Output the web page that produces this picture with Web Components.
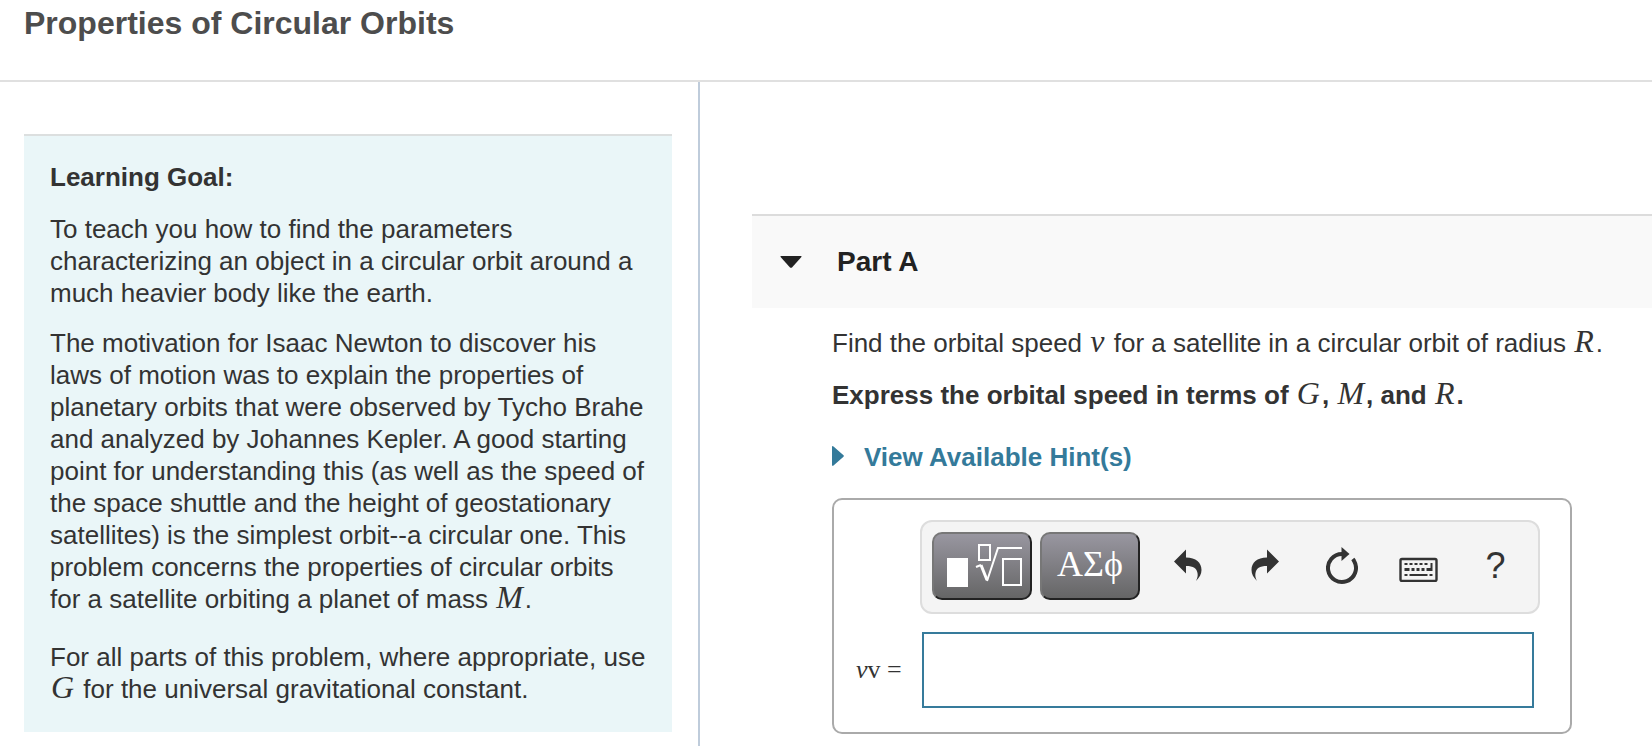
<!DOCTYPE html>
<html lang="en">
<head>
<meta charset="utf-8">
<title>Properties of Circular Orbits</title>
<style>
	body {
		margin: 0;
		background: #fff;
		color: #333;
		font: 26px/32px "Liberation Sans", Arial, sans-serif;
	}
	p {
		margin: 0;
	}
</style>
</head>
<body>
<problem-page>
	<span slot="title">Properties of Circular Orbits</span>
	<learning-goal slot="intro">
		<p>To teach you how to find the parameters characterizing an object in a circular orbit around a much heavier body like the earth.</p>
		<p>The motivation for Isaac Newton to discover his laws of motion was to explain the properties of planetary orbits that were observed by Tycho Brahe and analyzed by Johannes Kepler. A good starting point for understanding this (as well as the speed of the space shuttle and the height of geostationary satellites) is the simplest orbit--a circular one. This problem concerns the properties of circular orbits for a satellite orbiting a planet of mass <math-var>M</math-var>.</p>
		<p slot="note">For all parts of this problem, where appropriate, use <math-var>G</math-var> for the universal gravitational constant.</p>
	</learning-goal>
	<problem-part slot="parts" label="Part A">
		<p>Find the orbital speed <math-var>v</math-var> for a satellite in a circular orbit of radius <math-var>R</math-var>.</p>
		<p slot="instructions">Express the orbital speed in terms of <math-var>G</math-var>, <math-var>M</math-var>, and <math-var>R</math-var>.</p>
		<answer-box slot="answer"><i>v</i>v =</answer-box>
	</problem-part>
</problem-page>

<script>
'use strict';

window.customElements.define('math-var', class extends HTMLElement {
	constructor () {
		super();
		this.attachShadow({mode: 'open'}).innerHTML = `
			<style>
				:host {
					display: inline-block;
					padding: 0 2px 0 1px;
					font: italic 400 32px/26px "Liberation Serif", "Times New Roman", serif;
				}
			</style>
			<slot></slot>
		`;
	}
});

window.customElements.define('problem-page', class extends HTMLElement {
	constructor () {
		super();
		this.attachShadow({mode: 'open'}).innerHTML = `
			<style>
				:host {
					display: flex;
					flex-direction: column;
					min-height: 100vh;
				}
				header {
					padding: 5px 24px 39px;
					border-bottom: 2px solid #e0e0e0;
				}
				h1 {
					margin: 0;
					color: #4d4d4d;
					font-size: 32px;
					line-height: 36px;
				}
				main {
					flex: 1;
					display: grid;
					grid-template-columns: 175fr 238fr;
				}
				.intro {
					padding: 52px 26px 12px 24px;
					border-right: 2px solid #bfccdb;
				}
				.parts {
					min-width: 0;
					padding: 132px 0 10px 52px;
				}
			</style>
			<header><h1><slot name="title"></slot></h1></header>
			<main>
				<section class="intro"><slot name="intro"></slot></section>
				<section class="parts"><slot name="parts"></slot></section>
			</main>
		`;
	}
});

window.customElements.define('learning-goal', class extends HTMLElement {
	constructor () {
		super();
		this.attachShadow({mode: 'open'}).innerHTML = `
			<style>
				:host {
					display: block;
					padding: 25px 26px 27px;
					border-top: 2px solid #dcdfdf;
					background: #eaf6f8;
				}
				h2 {
					margin: 0 0 20px;
					font-size: 26px;
					line-height: 32px;
				}
				.text {
					display: flex;
					flex-direction: column;
					gap: 18px;
				}
				.note {
					margin-top: 26px;
				}
			</style>
			<h2>Learning Goal:</h2>
			<div class="text"><slot></slot></div>
			<div class="note"><slot name="note"></slot></div>
		`;
	}
});

window.customElements.define('problem-part', class extends HTMLElement {
	constructor () {
		super();
		this.attachShadow({mode: 'open'}).innerHTML = `
			<style>
				:host {
					display: block;
				}
				h2 {
					margin: 0;
					border-top: 2px solid #dcdcdc;
					background: #f9f9f9;
				}
				button {
					display: flex;
					align-items: center;
					gap: 35px;
					width: 100%;
					padding: 30px 28px;
					border: 0;
					background: none;
					color: #222;
					font: 700 28px/32px "Liberation Sans", Arial, sans-serif;
					text-align: left;
				}
				.body {
					padding: 19px 0 0 80px;
				}
				.instructions {
					margin-top: 20px;
					font-weight: 700;
				}
				.hints {
					display: flex;
					width: fit-content;
					align-items: center;
					gap: 20px;
					margin-top: 30px;
					color: #347a9a;
					font-weight: 700;
					text-decoration: none;
				}
				.answer {
					margin: 25px 80px 0 0;
				}
				svg {
					flex: none;
					fill: currentColor;
				}
			</style>
			<h2>
				<button type="button" aria-expanded="true">
					<svg width="22" height="12" viewBox="0 0 22 12" aria-hidden="true"><path d="M1 0h20q1 0 .4 1L12 11.400q-1 .8-2 0L.6 1Q0 0 1 0z"/></svg>
					<span></span>
				</button>
			</h2>
			<div class="body">
				<slot></slot>
				<div class="instructions"><slot name="instructions"></slot></div>
				<a class="hints" href="#hints">
					<svg width="12" height="22" viewBox="0 0 12 22" aria-hidden="true"><path d="M0 .5Q.5-.3 1.500.600L11.500 9.300q.7.7 0 1.400L1.500 19.500Q.5 20.200 0 19.500z"/></svg>
					<span>View Available Hint(s)</span>
				</a>
				<div class="answer"><slot name="answer"></slot></div>
			</div>
		`;
		this.shadowRoot.querySelector('button span').textContent = this.getAttribute('label');
	}
});

window.customElements.define('equation-toolbar', class extends HTMLElement {
	constructor () {
		super();
		this.attachShadow({mode: 'open'}).innerHTML = `
			<style>
				:host {
					display: flex;
					box-sizing: border-box;
					padding: 10px 4px 12px 10px;
					border: 2px solid #ddd;
					border-radius: 12px;
					background: #f4f4f4;
				}
				button {
					display: flex;
					align-items: center;
					justify-content: center;
					height: 68px;
					padding: 0;
					border: 0;
					background: none;
					color: #333;
					font: 36px/40px "Liberation Sans", Arial, sans-serif;
				}
				.palettes {
					display: flex;
					gap: 8px;
				}
				.palettes button {
					width: 100px;
					border: 2px solid;
					border-color: #777 #222 #222 #777;
					border-radius: 10px;
					background: linear-gradient(#9a98a2, #646464) border-box;
					color: #fff;
					font-family: "Liberation Serif", "Times New Roman", serif;
				}
				.palettes .greek {
					padding-bottom: 4px;
				}
				.actions {
					flex: 1;
					display: flex;
					margin-left: 10px;
				}
				.actions button {
					flex: 1;
				}
			</style>
			<div class="palettes">
				<button type="button" aria-label="Templates">
					<svg width="96" height="64" viewBox="0 0 96 64" fill="none" stroke="#fff" stroke-width="2" aria-hidden="true">
						<path fill="#fff" stroke="none" d="M13 24h21v29H13z"/>
						<path d="M45 11h11v15H45zM69 25h18v26H69z"/>
						<path d="M42 33l5-2" />
						<path stroke-width="3" d="M47 31l6 15"/>
						<path d="M53 47l11-33h24"/>
					</svg>
				</button>
				<button class="greek" type="button">ΑΣϕ</button>
			</div>
			<div class="actions">
				<button type="button" aria-label="Undo">
					<svg width="28" height="34" viewBox="0 0 28 34" fill="currentColor" aria-hidden="true"><path d="M0 12.500L12 .5v8c10 0 15.500 5 15.500 12.500 0 4-2 7.500-5.500 11 1.500-3 2-5.500 1.500-8-.7-4.500-4-7-11.500-7v7.500z"/></svg>
				</button>
				<button type="button" aria-label="Redo">
					<svg width="28" height="34" viewBox="0 0 28 34" fill="currentColor" aria-hidden="true"><path d="M28 12.500L16 .5v8C6 8.500.5 13.500.5 21c0 4 2 7.500 5.500 11-1.500-3-2-5.500-1.500-8 .7-4.500 4-7 11.500-7v7.500z"/></svg>
				</button>
				<button type="button" aria-label="Reset">
					<svg width="32" height="38" viewBox="0 0 32 38" aria-hidden="true">
						<path fill="none" stroke="currentColor" stroke-width="4" d="M16 7A14 14 0 1 0 28.100 14q-.6-1.200-1.300-2"/>
						<path fill="currentColor" d="M15.500 0l8 7-8 7z"/>
					</svg>
				</button>
				<button type="button" aria-label="Keyboard">
					<svg width="39" height="32" viewBox="0 0 38 32" aria-hidden="true">
						<rect x="1" y="9" width="36" height="22" rx="1.500" fill="none" stroke="currentColor" stroke-width="2.400"/>
						<path fill="currentColor" d="M5 13h3v2H5zM10 13h3v2h-3zM15 13h3v2h-3zM20 13h3v2h-3zM25 13h3v2h-3zM31 13h2v8h-6v-3h4zM5 18h5v3H5zM12 18h3v3h-3zM17 18h3v3h-3zM22 18h3v3h-3zM5 24h3v2H5zM10 24h18v2H10zM30 24h3v2h-3z"/>
					</svg>
				</button>
				<button type="button" title="Help">?</button>
			</div>
		`;
	}
});

window.customElements.define('answer-box', class extends HTMLElement {
	constructor () {
		super();
		this.attachShadow({mode: 'open'}).innerHTML = `
			<style>
				:host {
					display: grid;
					grid-template-columns: 64px 1fr;
					row-gap: 18px;
					padding: 20px 30px 24px 22px;
					border: 2px solid #aaa;
					border-radius: 10px;
				}
				equation-toolbar {
					grid-column: 2;
				}
				label {
					align-self: center;
					font: 26px/32px "Liberation Serif", "Times New Roman", serif;
					white-space: nowrap;
				}
				input {
					min-width: 0;
					height: 76px;
					margin: 0 6px 0 2px;
					padding: 0 12px;
					box-sizing: border-box;
					border: 2px solid #367b9b;
					border-radius: 0;
					background: #fff;
					color: inherit;
					font: 28px/32px "Liberation Serif", "Times New Roman", serif;
				}
			</style>
			<equation-toolbar></equation-toolbar>
			<label for="answer"><slot></slot></label>
			<input id="answer" type="text" autocomplete="off">
		`;
	}
});
</script>
</body>
</html>
